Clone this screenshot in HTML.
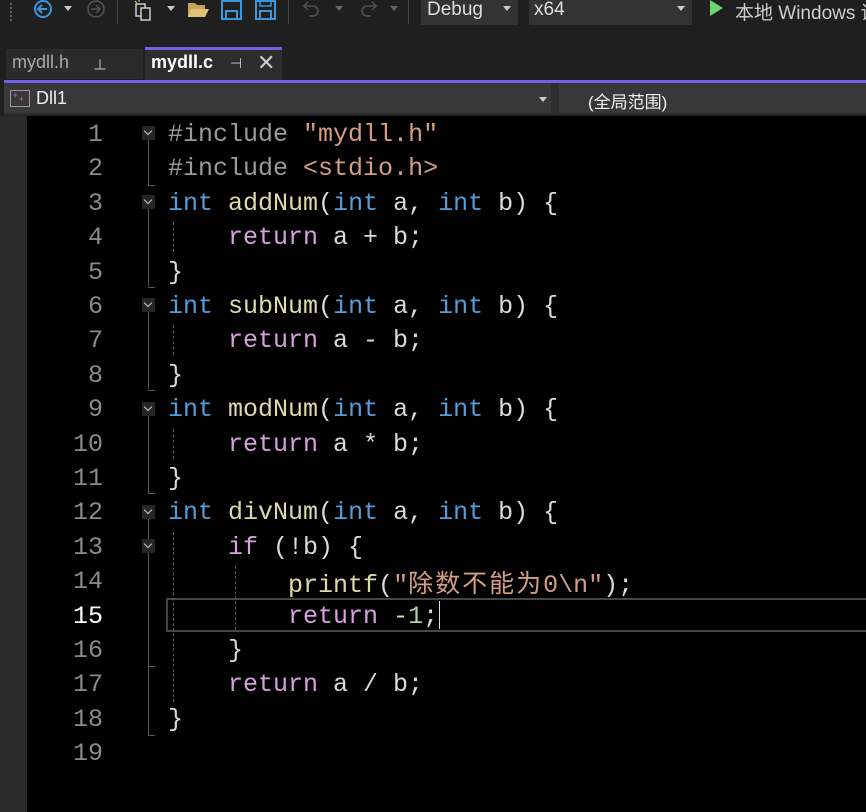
<!DOCTYPE html>
<html><head><meta charset="utf-8"><style>
*{margin:0;padding:0;box-sizing:border-box}
body{width:866px;height:812px;background:#1f1f1f;overflow:hidden;position:relative;font-family:"Liberation Sans","Noto Sans CJK SC",sans-serif;color:#ddd}
.a{position:absolute}
.code{font-family:"Liberation Mono","Noto Sans CJK SC",monospace;font-size:25px;white-space:pre;line-height:34.4px;height:34.4px;margin-top:2px}
.ln{width:60px;text-align:right;left:43px;color:#8a8a8a}
.k{color:#569cd6}.f{color:#dcdcaa}.p{color:#d8a0df}.s{color:#d69d85}.n{color:#b5cea8}.t{color:#dadada}.g{color:#9b9b9b}
.cj{font-family:"Noto Sans CJK SC",sans-serif;font-size:25px;letter-spacing:2px}
.fold{width:13px;height:14px;background:#262626;left:142px}
.fold:after{content:"";position:absolute;left:3px;top:2px;width:5px;height:5px;border-right:1.5px solid #ccc;border-bottom:1.5px solid #ccc;transform:rotate(45deg)}
.vl{width:1px;background:#5a5a5a;left:148px}
.tk{height:1px;width:7px;background:#5a5a5a;left:148px}
.dg{width:0;border-left:1px dashed #5a5a5a}
</style></head><body>
<div class="a" style="left:10px;top:3px;width:3px;height:18px;border-left:2px dotted #666"></div>
<svg class="a" style="left:32px;top:0" width="22" height="20"><circle cx="11" cy="9" r="8" fill="none" stroke="#3a96dd" stroke-width="2"/><path d="M15 9H7M10 5L6 9l4 4" fill="none" stroke="#3a96dd" stroke-width="2"/></svg>
<div class="a" style="left:64px;top:6px;border:4px solid transparent;border-top:5px solid #ccc"></div>
<svg class="a" style="left:85px;top:0" width="22" height="20"><circle cx="11" cy="9" r="8" fill="none" stroke="#555" stroke-width="1.5"/><path d="M6 9h8M11 5l4 4-4 4" fill="none" stroke="#555" stroke-width="1.5"/></svg>
<div class="a" style="left:117px;top:0;width:1px;height:24px;background:#444"></div>
<svg class="a" style="left:133px;top:0" width="24" height="22"><rect x="3" y="4" width="9" height="12" fill="none" stroke="#ccc" stroke-width="1.5"/><rect x="8" y="8" width="9" height="12" fill="#1f1f1f" stroke="#ccc" stroke-width="1.5"/><path d="M2 1l2 2M6 0v2" stroke="#e8c46a"/></svg>
<div class="a" style="left:167px;top:6px;border:4px solid transparent;border-top:5px solid #ccc"></div>
<svg class="a" style="left:187px;top:0" width="24" height="20"><path d="M1 3h7l2 2h8v12H1z" fill="#c8a35a"/><path d="M4 9h18l-4 8H1z" fill="#e3c07a"/></svg>
<svg class="a" style="left:220px;top:0" width="24" height="20"><rect x="2" y="1" width="19" height="18" fill="none" stroke="#3a96dd" stroke-width="2"/><rect x="6" y="11" width="11" height="8" fill="none" stroke="#3a96dd" stroke-width="2"/></svg>
<svg class="a" style="left:254px;top:0" width="24" height="20"><rect x="2" y="1" width="19" height="18" fill="none" stroke="#3a96dd" stroke-width="2"/><rect x="6" y="11" width="11" height="8" fill="none" stroke="#3a96dd" stroke-width="2"/><path d="M6 1v5h11V1" fill="none" stroke="#3a96dd" stroke-width="1.5"/></svg>
<div class="a" style="left:288px;top:0;width:1px;height:24px;background:#444"></div>
<svg class="a" style="left:300px;top:0" width="24" height="20"><path d="M8 2L4 6l4 4M4 6h9a5 5 0 0 1 0 10h-4" fill="none" stroke="#555" stroke-width="1.5"/></svg>
<div class="a" style="left:335px;top:6px;border:4px solid transparent;border-top:5px solid #666"></div>
<svg class="a" style="left:356px;top:0" width="24" height="20"><path d="M16 2l4 4-4 4M20 6h-9a5 5 0 0 0 0 10h4" fill="none" stroke="#555" stroke-width="1.5"/></svg>
<div class="a" style="left:390px;top:6px;border:4px solid transparent;border-top:5px solid #666"></div>
<div class="a" style="left:408px;top:0;width:1px;height:24px;background:#444"></div>
<div class="a" style="left:421px;top:0;width:97px;height:25px;background:#333;font-size:19px;padding-left:6px;line-height:20px">Debug</div>
<div class="a" style="left:503px;top:6px;border:4px solid transparent;border-top:5px solid #ccc"></div>
<div class="a" style="left:529px;top:0;width:163px;height:25px;background:#333;font-size:19px;padding-left:5px;line-height:20px">x64</div>
<div class="a" style="left:677px;top:6px;border:4px solid transparent;border-top:5px solid #ccc"></div>
<div class="a" style="left:710px;top:0;border:8px solid transparent;border-left:13px solid #6dd36d;border-right:0;height:0"></div>
<div class="a" style="left:735px;top:-2px;font-size:19px;color:#ccc;white-space:nowrap">本地 Windows 调</div>
<div class="a" style="left:6px;top:49px;width:137px;height:30px;background:#2b2b2b"></div>
<div class="a" style="left:12px;top:52px;font-size:18px;color:#aaa">mydll.h</div>
<div class="a" style="left:93px;top:55px;font-size:14px;color:#ccc">⊥</div>
<div class="a" style="left:145px;top:47px;width:137px;height:33px;background:#2d2d2d;border-top:3px solid #7160e8"></div>
<div class="a" style="left:151px;top:52px;font-size:18px;font-weight:bold;color:#fff">mydll.c</div>
<div class="a" style="left:230px;top:55px;font-size:14px;color:#ccc">⊣</div>
<div class="a" style="left:257px;top:50px;font-size:22px;color:#ccc">✕</div>
<div class="a" style="left:4px;top:80px;width:862px;height:3px;background:#7160e8"></div>
<div class="a" style="left:4px;top:83px;width:862px;height:32px;background:#2d2d2d"></div>
<div class="a" style="left:4px;top:83px;width:862px;height:30px;background:#383838"></div>
<div class="a" style="left:551px;top:83px;width:8px;height:30px;background:#2d2d2d"></div>
<div class="a" style="left:10px;top:90px;width:20px;height:17px;border:1.5px solid #999;color:#c865d8;font-size:12px;line-height:13px;padding-left:1px">⁺₊</div>
<div class="a" style="left:36px;top:88px;font-size:18px;color:#eee">Dll1</div>
<div class="a" style="left:539px;top:97px;border:4px solid transparent;border-top:5px solid #ccc"></div>
<div class="a" style="left:588px;top:88px;font-size:17px;color:#eee">(全局范围)</div>
<div class="a" style="left:0;top:116px;width:866px;height:696px;background:#000"></div>
<div class="a" style="left:0;top:116px;width:27px;height:696px;background:#2b2b2b"></div>
<div class="a" style="left:166px;top:598px;width:700px;height:34px;border:2px solid #464646;border-right:none"></div>
<div class="a" style="left:439px;top:601px;width:1px;height:28px;background:#ddd"></div>

<div class="a code ln" style="top:116px">1</div>
<div class="a code ln" style="top:150.4px">2</div>
<div class="a code ln" style="top:184.8px">3</div>
<div class="a code ln" style="top:219.2px">4</div>
<div class="a code ln" style="top:253.6px">5</div>
<div class="a code ln" style="top:288px">6</div>
<div class="a code ln" style="top:322.4px">7</div>
<div class="a code ln" style="top:356.8px">8</div>
<div class="a code ln" style="top:391.2px">9</div>
<div class="a code ln" style="top:425.6px">10</div>
<div class="a code ln" style="top:460px">11</div>
<div class="a code ln" style="top:494.4px">12</div>
<div class="a code ln" style="top:528.8px">13</div>
<div class="a code ln" style="top:563.2px">14</div>
<div class="a code ln" style="top:597.6px;color:#fff">15</div>
<div class="a code ln" style="top:632px">16</div>
<div class="a code ln" style="top:666.4px">17</div>
<div class="a code ln" style="top:700.8px">18</div>
<div class="a code ln" style="top:735.2px">19</div>

<div class="a vl" style="top:140px;height:46px"></div><div class="a tk" style="top:185px"></div>
<div class="a vl" style="top:209px;height:77px"></div><div class="a tk" style="top:287px"></div>
<div class="a vl" style="top:312px;height:77px"></div><div class="a tk" style="top:390px"></div>
<div class="a vl" style="top:416px;height:77px"></div><div class="a tk" style="top:493px"></div>
<div class="a vl" style="top:519px;height:216px"></div><div class="a tk" style="top:735px"></div>
<div class="a tk" style="top:666px"></div>
<div class="a fold" style="top:126px"></div>
<div class="a fold" style="top:195px"></div>
<div class="a fold" style="top:298px"></div>
<div class="a fold" style="top:402px"></div>
<div class="a fold" style="top:505px"></div>
<div class="a fold" style="top:539px"></div>
<div class="a dg" style="left:173px;top:222px;height:30px"></div>
<div class="a dg" style="left:173px;top:325px;height:30px"></div>
<div class="a dg" style="left:173px;top:429px;height:30px"></div>
<div class="a dg" style="left:173px;top:532px;height:170px"></div>
<div class="a dg" style="left:235px;top:566px;height:64px"></div>

<div class="a code" style="left:168px;top:116px"><span class="g">#include</span> <span class="s">"mydll.h"</span></div>
<div class="a code" style="left:168px;top:150.4px"><span class="g">#include</span> <span class="s">&lt;stdio.h&gt;</span></div>
<div class="a code" style="left:168px;top:184.8px"><span class="k">int</span> <span class="f">addNum</span><span class="t">(</span><span class="k">int</span> <span class="t">a, </span><span class="k">int</span><span class="t"> b) {</span></div>
<div class="a code" style="left:168px;top:219.2px">    <span class="p">return</span><span class="t"> a + b;</span></div>
<div class="a code t" style="left:168px;top:253.6px">}</div>
<div class="a code" style="left:168px;top:288px"><span class="k">int</span> <span class="f">subNum</span><span class="t">(</span><span class="k">int</span> <span class="t">a, </span><span class="k">int</span><span class="t"> b) {</span></div>
<div class="a code" style="left:168px;top:322.4px">    <span class="p">return</span><span class="t"> a - b;</span></div>
<div class="a code t" style="left:168px;top:356.8px">}</div>
<div class="a code" style="left:168px;top:391.2px"><span class="k">int</span> <span class="f">modNum</span><span class="t">(</span><span class="k">int</span> <span class="t">a, </span><span class="k">int</span><span class="t"> b) {</span></div>
<div class="a code" style="left:168px;top:425.6px">    <span class="p">return</span><span class="t"> a * b;</span></div>
<div class="a code t" style="left:168px;top:460px">}</div>
<div class="a code" style="left:168px;top:494.4px"><span class="k">int</span> <span class="f">divNum</span><span class="t">(</span><span class="k">int</span> <span class="t">a, </span><span class="k">int</span><span class="t"> b) {</span></div>
<div class="a code" style="left:168px;top:528.8px">    <span class="p">if</span><span class="t"> (!b) {</span></div>
<div class="a code" style="left:168px;top:563.2px">        <span class="f">printf</span><span class="t">(</span><span class="s">"<span class="cj">除数不能为</span>0\n"</span><span class="t">);</span></div>
<div class="a code" style="left:168px;top:597.6px">        <span class="p">return</span><span class="t"> -</span><span class="n">1</span><span class="t">;</span></div>
<div class="a code t" style="left:168px;top:632px">    }</div>
<div class="a code" style="left:168px;top:666.4px">    <span class="p">return</span><span class="t"> a / b;</span></div>
<div class="a code t" style="left:168px;top:700.8px">}</div>
</body></html>
